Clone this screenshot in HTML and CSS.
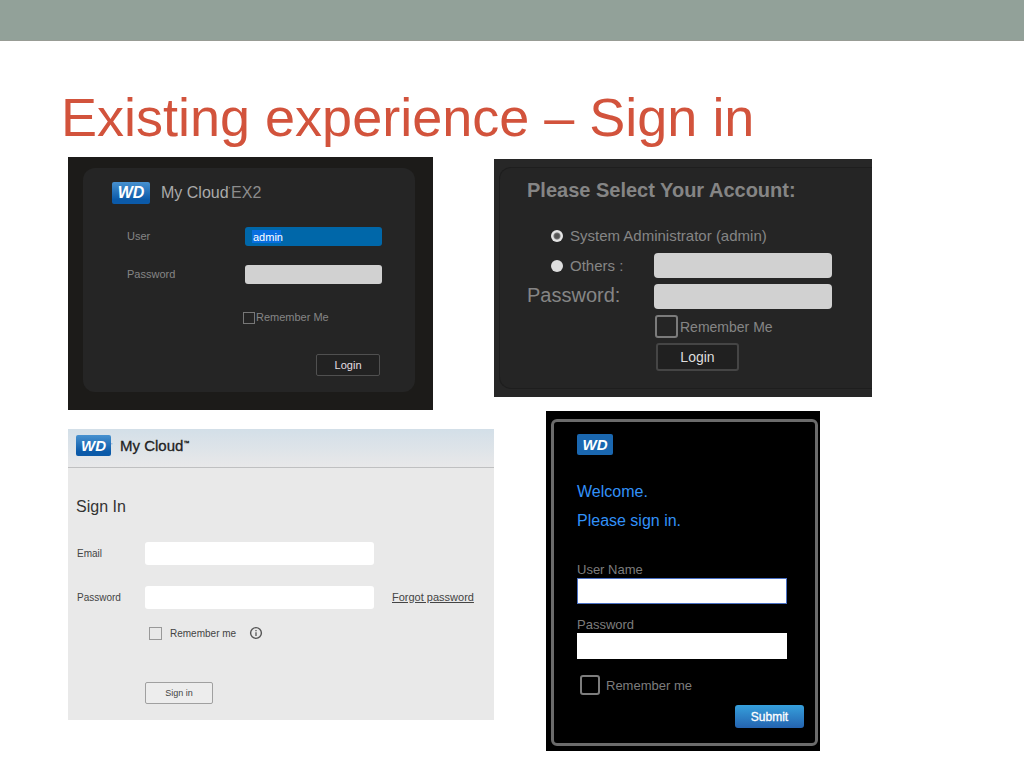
FILE: index.html
```html
<!DOCTYPE html>
<html lang="en">
<head>
<meta charset="utf-8">
<title>Existing experience – Sign in</title>
<link rel="stylesheet" href="styles.css">
</head>
<body>
<div class="band"></div>
<main class="slide">
  <h1 class="title">Existing experience – Sign in</h1>
  <div class="shots">
    <div class="column">
      <section class="ex2">
        <form class="ex2-card">
          <div class="brand"><span class="wd">WD</span><span class="ex2-name">My Cloud<sup>'</sup><span class="thin">EX2</span></span></div>
          <div class="ex2-form">
            <label for="ex2-user">User</label>
            <input class="ex2-input selected" id="ex2-user" type="text" value="admin">
            <label for="ex2-pass">Password</label>
            <input class="ex2-input" id="ex2-pass" type="password">
          </div>
          <label class="ex2-remember"><input class="box" type="checkbox">Remember Me</label>
          <button class="ex2-login" type="button">Login</button>
        </form>
      </section>

      <section class="cloud">
        <header class="cloud-head"><span class="wd small">WD</span><sup class="reg">'</sup><span class="cloud-name">My Cloud<sup>™</sup></span></header>
        <form class="cloud-body">
          <h2 class="cloud-title">Sign In</h2>
          <div class="cloud-row">
            <label for="cloud-email">Email</label>
            <input class="cloud-input" id="cloud-email" type="text">
          </div>
          <div class="cloud-row">
            <label for="cloud-pass">Password</label>
            <input class="cloud-input" id="cloud-pass" type="password">
            <a class="forgot" href="#">Forgot password</a>
          </div>
          <div class="cloud-remember">
            <label><input class="box" type="checkbox">Remember me</label>
            <svg width="14" height="14" viewBox="0 0 14 14" fill="none" stroke="#555" aria-hidden="true"><circle cx="7" cy="7" r="5.4" stroke-width="1.4"/><path d="M7 6.3v3.8" stroke-width="1.3"/><path d="M7 3.9v1.3" stroke-width="1.3"/></svg>
          </div>
          <button class="cloud-submit" type="button">Sign in</button>
        </form>
      </section>
    </div>

    <div class="column second">
      <section class="account">
        <form class="account-card">
          <h2 class="account-title">Please Select Your Account:</h2>
          <div class="account-admin">
            <label><input class="dot" type="radio" name="who" checked>System Administrator (admin)</label>
          </div>
          <div class="account-row">
            <label class="others"><input class="dot" type="radio" name="who">Others :</label>
            <input class="account-input" type="text" aria-label="Other account">
          </div>
          <div class="account-row">
            <label class="account-pass" for="account-pass">Password:</label>
            <input class="account-input" id="account-pass" type="password">
          </div>
          <label class="account-remember"><input class="box" type="checkbox">Remember Me</label>
          <button class="account-login" type="button">Login</button>
        </form>
      </section>

      <section class="welcome">
        <form class="welcome-card">
          <span class="wd flat">WD</span>
          <p class="greeting">Welcome.<br>Please sign in.</p>
          <label for="w-user">User Name</label>
          <input class="welcome-input active" id="w-user" type="text">
          <label for="w-pass">Password</label>
          <input class="welcome-input" id="w-pass" type="password">
          <label class="welcome-remember"><input class="box" type="checkbox">Remember me</label>
          <button class="welcome-submit" type="button">Submit</button>
        </form>
      </section>
    </div>
  </div>
</main>
</body>
</html>
```
FILE: styles.css
```css
* { box-sizing: border-box; }

body {
  margin: 0;
  background: #fff;
  font-family: "Liberation Sans", Arial, sans-serif;
}

h1, h2, p { margin: 0; font-weight: normal; }

input, button { font-family: inherit; margin: 0; outline: none; }
input { min-width: 0; border: 0; }
button { padding: 0; }

.band {
  height: 41px;
  background: #92a199;
  border-bottom: 1px solid #989c95;
}

.slide { padding: 44px 152px 16px 68px; }

.title {
  margin-left: -7px;
  height: 72px;
  line-height: 64px;
  font-size: 54px;
  color: #d2533c;
  white-space: nowrap;
}

.shots {
  display: grid;
  grid-template-columns: 426fr 378fr;
}

.column { display: flex; flex-direction: column; gap: 19px; }
.second { padding-top: 2px; gap: 14px; }

.box {
  appearance: none;
  flex: none;
  width: 12px;
  height: 12px;
  border: 1px solid #777;
}

.wd {
  display: inline-flex;
  align-items: center;
  justify-content: center;
  width: 38px;
  height: 22px;
  border-radius: 2px;
  background: linear-gradient(#4791cf, #0b5aa9 80%);
  color: #fff;
  font-size: 16px;
  line-height: 22px;
  font-weight: bold;
  font-style: italic;
}
.small { width: 35px; height: 21px; font-size: 15px; line-height: 21px; }
.flat { width: 36px; height: 21px; font-size: 15px; line-height: 21px; background: #1a67b0; }

/* My Cloud EX2 */
.ex2 {
  width: 85.7%;
  padding: 11px 18px 18px 15px;
  background: #1c1b19;
}
.ex2-card {
  display: flex;
  flex-direction: column;
  padding: 14px 33px 16px 29px;
  border-radius: 12px;
  background: #252525;
  color: #858585;
  font-size: 11px;
  line-height: 13px;
}
.brand { display: flex; align-items: center; gap: 11px; }
.ex2-name { font-size: 16px; line-height: 22px; color: #aaa; }
.ex2-name sup { font-size: 8px; line-height: 0; }
.thin { margin-left: 1px; color: #8c8c8c; }
.ex2-form {
  display: grid;
  grid-template-columns: 118px 1fr;
  row-gap: 19px;
  align-items: center;
  margin-top: 23px;
  padding-left: 15px;
}
.ex2-input {
  height: 19px;
  padding: 0 8px;
  border-radius: 3px;
  background: #d1d1d1;
  color: #fff;
  font-size: 11px;
}
.selected { background: linear-gradient(#086fe0, #086fe0) 7px 3px / 29px 13px no-repeat #0067a9; }
.ex2-remember { display: flex; align-items: center; gap: 1px; margin: 27px 0 0 131px; }
.ex2-login {
  align-self: flex-end;
  width: 64px;
  height: 22px;
  margin: 30px 2px 0 0;
  border: 1px solid #505050;
  border-radius: 2px;
  background: #222;
  color: #e4dfe2;
  font-size: 11px;
}

/* My Cloud web sign-in */
.cloud { background: #e9e9e9; color: #444; font-size: 10px; line-height: 13px; }
.cloud-head {
  display: flex;
  align-items: center;
  height: 39px;
  padding: 0 8px 5px;
  border-bottom: 1px solid #bfc0c1;
  background: linear-gradient(#d3dfe8, #e8e8e9);
}
.reg { width: 9px; font-size: 7px; line-height: 20px; color: #4791cf; }
.cloud-name {
  font-size: 15px;
  line-height: 21px;
  color: #222;
  -webkit-text-stroke: 0.3px #222;
}
.cloud-name sup { font-size: 6px; line-height: 0; }
.cloud-body { display: flex; flex-direction: column; padding: 29px 8px 16px; }
.cloud-title { margin-bottom: 25px; font-size: 16px; line-height: 20px; color: #333; }
.cloud-row {
  display: grid;
  grid-template-columns: 68px 229px 1fr;
  align-items: center;
  margin-bottom: 21px;
  padding-left: 1px;
}
.cloud-input { height: 23px; border-radius: 3px; background: #fff; }
.forgot { margin-left: 18px; font-size: 11px; color: #444; }
.cloud-remember { display: flex; align-items: center; gap: 13px; margin: -4px 0 0 73px; }
.cloud-remember label { display: flex; align-items: center; gap: 8px; }
.cloud-remember .box { width: 13px; height: 13px; border: 1px solid #999; }
.cloud-submit {
  width: 68px;
  height: 22px;
  margin: 42px 0 0 69px;
  border: 1px solid #a0a0a0;
  border-radius: 2px;
  background: #ededed;
  color: #444;
  font-size: 9px;
}

/* Account selection */
.account { padding: 8px 0 8px 5px; background: #272727; }
.account-card {
  display: flex;
  flex-direction: column;
  padding: 11px 40px 17px 27px;
  border: 1px solid #1e1e1e;
  border-right: 0;
  border-radius: 12px 0 0 12px;
  background: #252525;
  color: #858585;
  font-size: 15px;
}
.account-title { font-size: 20px; line-height: 22px; font-weight: bold; }
.account-admin { margin: 24px 0 6px 24px; line-height: 22px; }
.account-admin label, .others { display: flex; align-items: center; gap: 7px; }
.dot {
  appearance: none;
  flex: none;
  width: 12px;
  height: 12px;
  border-radius: 50%;
  background: #dedede;
}
.dot:checked { background: radial-gradient(circle, #555 0 2px, #777 3px, #e4e4e4 4px); }
.account-row {
  display: grid;
  grid-template-columns: 127px 1fr;
  align-items: center;
  margin-bottom: 6px;
}
.others { padding-left: 24px; }
.account-pass { font-size: 20px; line-height: 22px; }
.account-row:has(.account-pass) { align-items: start; }
.account-input { height: 25px; border-radius: 4px; background: #d1d1d1; }
.account-remember {
  display: flex;
  align-items: center;
  gap: 2px;
  margin-left: 128px;
  font-size: 14px;
}
.account-remember .box { width: 23px; height: 23px; border: 2px solid #7b7b7b; border-radius: 3px; }
.account-login {
  width: 83px;
  height: 28px;
  margin: 5px 0 0 129px;
  border: 2px solid #454545;
  border-radius: 3px;
  background: #202020;
  color: #ddd;
  font-size: 14px;
}

/* Welcome */
.welcome {
  width: 72.5%;
  margin-left: 52px;
  padding: 8px 2px 5px 5px;
  background: #000;
}
.welcome-card {
  display: flex;
  flex-direction: column;
  padding: 12px 11px 15px 23px;
  border: 3px solid #6b6b6b;
  border-radius: 6px;
  color: #7d7d7d;
  font-size: 13px;
  line-height: 17px;
}
.greeting { margin: 22px 0 26px; font-size: 16px; line-height: 29px; color: #3291f8; }
.welcome-input { height: 26px; margin: 0 17px 12px 0; border: 1px solid #fff; background: #fff; }
.active { border-color: #4a70c4; }
.welcome-remember { display: flex; align-items: center; gap: 6px; margin: 4px 0 0 3px; }
.welcome-remember .box { width: 20px; height: 20px; border: 2px solid #7d7d7d; border-radius: 3px; }
.welcome-submit {
  align-self: flex-end;
  width: 69px;
  height: 23px;
  margin-top: 10px;
  border: 0;
  border-radius: 3px;
  background: linear-gradient(#36a0dc, #2463b0);
  color: #fff;
  font-size: 12px;
  -webkit-text-stroke: 0.3px #fff;
}
```
